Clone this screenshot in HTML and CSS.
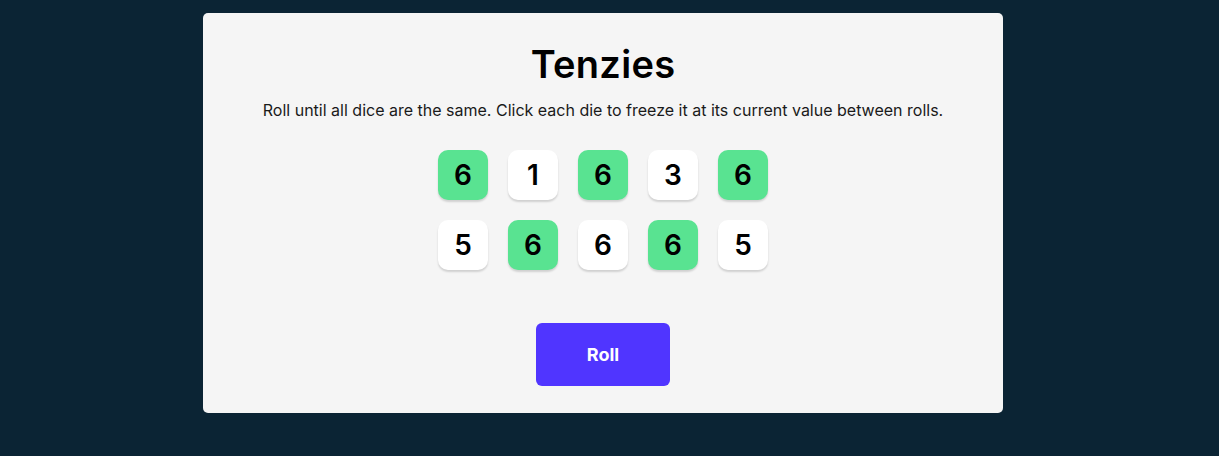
FILE: index.html
```html
<!DOCTYPE html>
<html lang="en">
<head>
    <meta charset="UTF-8">
    <meta name="viewport" content="width=device-width, initial-scale=1.0">
    <title>Tenzies</title>
    <link rel="stylesheet" href="styles.css">
</head>
<body>
    <main class="game">
        <h1 class="title">Tenzies</h1>
        <p class="instructions">Roll until all dice are the same. Click each die to freeze it at its current value between rolls.</p>
        <div class="dice-grid">
            <button class="die held">6</button>
            <button class="die">1</button>
            <button class="die held">6</button>
            <button class="die">3</button>
            <button class="die held">6</button>
            <button class="die">5</button>
            <button class="die held">6</button>
            <button class="die">6</button>
            <button class="die held">6</button>
            <button class="die">5</button>
        </div>
        <button class="roll-btn">Roll</button>
    </main>
</body>
</html>
```

FILE: styles.css
```css
body {
    margin: 0;
    padding: 13px 13px 0 0;
    background-color: #0b2434;
    font-family: Inter, "Liberation Sans", sans-serif;
}

.game {
    box-sizing: border-box;
    width: 800px;
    height: 400px;
    margin: 0 auto;
    padding-top: 31px;
    background-color: #f5f5f5;
    border-radius: 5px;
    display: flex;
    flex-direction: column;
    align-items: center;
}

.title {
    margin: 0;
    font-size: 38px;
    line-height: 40px;
    font-weight: 600;
    letter-spacing: 0.3px;
    color: #000;
}

.instructions {
    margin: 16px 0 0;
    font-size: 16px;
    line-height: 20px;
    color: #1a1a1a;
}

.dice-grid {
    margin-top: 30px;
    display: grid;
    grid-template-columns: repeat(5, 50px);
    gap: 20px;
}

.die {
    width: 50px;
    height: 50px;
    padding: 0;
    border: none;
    border-radius: 10px;
    background-color: #fff;
    box-shadow: 0 2px 2px rgba(0, 0, 0, 0.15);
    font-family: Inter, "Liberation Sans", sans-serif;
    font-size: 28px;
    font-weight: 600;
    color: #000;
    cursor: pointer;
}

.die.held {
    background-color: #59e391;
}

.roll-btn {
    margin-top: 53px;
    width: 134px;
    height: 63px;
    border: none;
    border-radius: 6px;
    background-color: #5035ff;
    color: #fff;
    font-family: Inter, "Liberation Sans", sans-serif;
    font-size: 18px;
    font-weight: 700;
    cursor: pointer;
}
```
